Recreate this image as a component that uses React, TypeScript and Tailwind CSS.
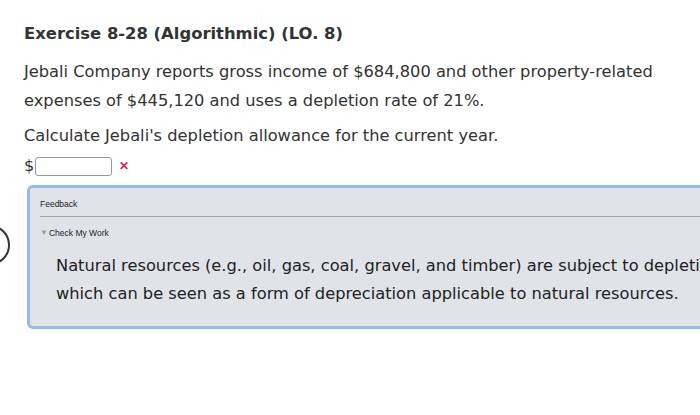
import React from "react";

const verdana = { fontFamily: '"DejaVu Sans", Verdana, sans-serif' };
const arial = { fontFamily: '"Liberation Sans", Arial, sans-serif' };

export default function App() {
  return (
    <div className="relative h-[415px] w-[700px] overflow-hidden bg-white text-[#333]" style={verdana}>
      {/* partial circle peeking in from the left edge */}
      <div className="absolute left-[-30px] top-[225px] h-[40px] w-[40px] rounded-full border-2 border-[#333]" />

      <div className="pl-6 pt-[22px]">
        <h1 className="text-[16.4px] font-bold leading-6 text-[#333]">
          Exercise 8-28 (Algorithmic) (LO. 8)
        </h1>

        <p className="mt-[11px] w-[660px] text-[16.25px] leading-[29px]">
          Jebali Company reports gross income of $684,800 and other property-related expenses of
          $445,120 and uses a depletion rate of 21%.
        </p>

        <p className="mt-[6px] text-[16.25px] leading-[29px]">
          Calculate Jebali's depletion allowance for the current year.
        </p>

        <div className="mt-[6px] flex items-center">
          <span className="text-[16px] leading-5">$</span>
          <div className="ml-px h-[19px] w-[77px] rounded-[3px] border border-[#999] bg-white" />
          <span className="ml-[7px] text-[12px] font-bold text-[#d9254a]" style={arial}>
            ✕
          </span>
        </div>
      </div>

      <div className="ml-[27px] mt-[9px] w-[700px] rounded-[6px] border-[3px] border-r-0 border-[#93bbee] bg-[#e0e4e8] pb-[18px] pl-[10px] pt-[10px]">
        <div className="text-[8.5px] leading-3 text-[#222]" style={arial}>
          Feedback
        </div>
        <div className="mt-[6px] border-t border-[#a4a8ad]" />
        <div className="mt-[10px] flex items-center text-[8.5px] leading-3 text-[#222]" style={arial}>
          <span className="mr-[1px] text-[8px] text-[#999]">▼</span>
          Check My Work
        </div>
        <div className="mt-[13px] whitespace-nowrap pl-[16px] text-[16.25px] leading-[28px] text-[#222]">
          Natural resources (e.g., oil, gas, coal, gravel, and timber) are subject to depletion,
          <br />
          which can be seen as a form of depreciation applicable to natural resources.
        </div>
      </div>
    </div>
  );
}
